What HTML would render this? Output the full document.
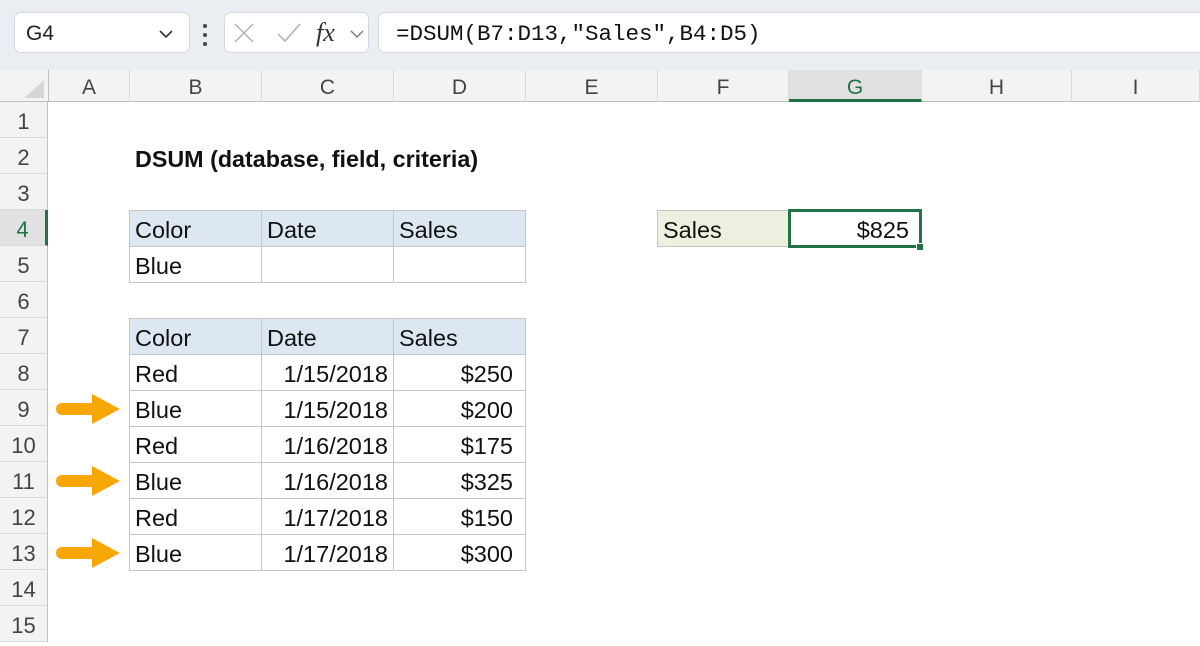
<!DOCTYPE html>
<html><head><style>
*{margin:0;padding:0;box-sizing:border-box}
body{width:1200px;height:630px;overflow:hidden;background:#fff;font-family:"Liberation Sans",sans-serif;position:relative}
.a{position:absolute}
.top{left:0;top:0;width:1200px;height:70px;background:#eaeef3}
.box{background:#fff;border:1px solid #d4d8de;border-radius:7px}
.ch{position:absolute;top:70px;height:32px;background:#f3f3f3;border-right:1px solid #d9d9d9;border-bottom:1px solid #bfbfbf;text-align:center;line-height:35px;font-size:21px;color:#444}
.rh{position:absolute;left:0;width:48px;height:36px;background:#f3f3f3;border-bottom:1px solid #d9d9d9;border-right:1px solid #bfbfbf;text-align:center;line-height:40px;font-size:22px;color:#444}
.c{position:absolute;height:37px;border:1px solid #c6c6c6;font-size:23.5px;line-height:39px;padding:0 5px;color:#111;white-space:nowrap}
.h{background:#dde7f1}
.r{text-align:right}
</style></head><body>
<div class="a top"></div>
<div class="a box" style="left:14px;top:12px;width:176px;height:41px"></div>
<div class="a" style="left:26px;top:22px;font-size:21px;color:#222">G4</div>
<svg class="a" style="left:158px;top:29px" width="16" height="10"><path d="M2 2 L8 8 L14 2" fill="none" stroke="#333" stroke-width="1.6"/></svg>
<div class="a" style="left:203px;top:24px;width:4px;height:4px;background:#444;border-radius:2px"></div>
<div class="a" style="left:203px;top:33px;width:4px;height:4px;background:#444;border-radius:2px"></div>
<div class="a" style="left:203px;top:42px;width:4px;height:4px;background:#444;border-radius:2px"></div>
<div class="a box" style="left:224px;top:12px;width:145px;height:41px"></div>
<svg class="a" style="left:230px;top:20px" width="140" height="28"><path d="M5 4 L23 22 M23 4 L5 22" stroke="#b0b0b0" stroke-width="1.5"/><path d="M48 14 L55 21 L70 4" fill="none" stroke="#b0b0b0" stroke-width="1.5"/><path d="M121 11 L127 17 L133 11" fill="none" stroke="#777" stroke-width="1.4"/></svg>
<div class="a" style="left:316px;top:18px;font-family:'Liberation Serif',serif;font-style:italic;font-size:26px;color:#333">fx</div>
<div class="a box" style="left:378px;top:12px;width:830px;height:41px"></div>
<div class="a" style="left:396px;top:21px;font-family:'Liberation Mono',monospace;font-size:22.5px;color:#111">=DSUM(B7:D13,"Sales",B4:D5)</div>

<div class="ch" style="left:0;width:49px;border-right:1px solid #bfbfbf"></div>
<svg class="a" style="left:22px;top:78px" width="24" height="22"><path d="M22 2 L22 20 L2 20 Z" fill="#d6d6d6"/></svg>
<div class="ch" style="left:49px;width:81px">A</div>
<div class="ch" style="left:130px;width:132px">B</div>
<div class="ch" style="left:262px;width:132px">C</div>
<div class="ch" style="left:394px;width:132px">D</div>
<div class="ch" style="left:526px;width:132px">E</div>
<div class="ch" style="left:658px;width:131px">F</div>
<div class="ch" style="left:789px;width:133px;background:#e1e1e1;color:#217346;border-bottom:3px solid #217346">G</div>
<div class="ch" style="left:922px;width:150px">H</div>
<div class="ch" style="left:1072px;width:128px">I</div>

<div class="rh" style="top:102px">1</div>
<div class="rh" style="top:138px">2</div>
<div class="rh" style="top:174px">3</div>
<div class="rh" style="top:210px;background:#e1e1e1;color:#217346;border-right:3px solid #217346">4</div>
<div class="rh" style="top:246px">5</div>
<div class="rh" style="top:282px">6</div>
<div class="rh" style="top:318px">7</div>
<div class="rh" style="top:354px">8</div>
<div class="rh" style="top:390px">9</div>
<div class="rh" style="top:426px">10</div>
<div class="rh" style="top:462px">11</div>
<div class="rh" style="top:498px">12</div>
<div class="rh" style="top:534px">13</div>
<div class="rh" style="top:570px">14</div>
<div class="rh" style="top:606px">15</div>

<div class="a" style="left:135px;top:146px;font-size:23.3px;font-weight:bold;color:#111;white-space:nowrap">DSUM (database, field, criteria)</div>

<div class="c h" style="left:129px;top:210px;width:133px">Color</div>
<div class="c h" style="left:261px;top:210px;width:133px">Date</div>
<div class="c h" style="left:393px;top:210px;width:133px">Sales</div>
<div class="c" style="left:129px;top:246px;width:133px">Blue</div>
<div class="c" style="left:261px;top:246px;width:133px"></div>
<div class="c" style="left:393px;top:246px;width:133px"></div>

<div class="c h" style="left:129px;top:318px;width:133px">Color</div>
<div class="c h" style="left:261px;top:318px;width:133px">Date</div>
<div class="c h" style="left:393px;top:318px;width:133px">Sales</div>

<div class="c" style="left:129px;top:354px;width:133px">Red</div><div class="c r" style="left:261px;top:354px;width:133px">1/15/2018</div><div class="c r" style="left:393px;top:354px;width:133px;padding-right:12px">$250</div>
<div class="c" style="left:129px;top:390px;width:133px">Blue</div><div class="c r" style="left:261px;top:390px;width:133px">1/15/2018</div><div class="c r" style="left:393px;top:390px;width:133px;padding-right:12px">$200</div>
<div class="c" style="left:129px;top:426px;width:133px">Red</div><div class="c r" style="left:261px;top:426px;width:133px">1/16/2018</div><div class="c r" style="left:393px;top:426px;width:133px;padding-right:12px">$175</div>
<div class="c" style="left:129px;top:462px;width:133px">Blue</div><div class="c r" style="left:261px;top:462px;width:133px">1/16/2018</div><div class="c r" style="left:393px;top:462px;width:133px;padding-right:12px">$325</div>
<div class="c" style="left:129px;top:498px;width:133px">Red</div><div class="c r" style="left:261px;top:498px;width:133px">1/17/2018</div><div class="c r" style="left:393px;top:498px;width:133px;padding-right:12px">$150</div>
<div class="c" style="left:129px;top:534px;width:133px">Blue</div><div class="c r" style="left:261px;top:534px;width:133px">1/17/2018</div><div class="c r" style="left:393px;top:534px;width:133px;padding-right:12px">$300</div>

<div class="c" style="left:657px;top:210px;width:133px;background:#ebf1de">Sales</div>
<div class="a" style="left:788px;top:209px;width:134px;height:39px;border:3px solid #217346;font-size:23.5px;line-height:37px;text-align:right;padding-right:10px;color:#111">$825</div>
<div class="a" style="left:916px;top:243px;width:8px;height:8px;background:#217346;border:1px solid #fff"></div>

<svg class="a" style="left:0;top:0" width="130" height="630">
<g fill="#f6a800">
<path d="M62 403 H92 V394 L120 409 L92 424 V415 H62 A6 6 0 0 1 62 403 Z"/>
<path d="M62 475 H92 V466 L120 481 L92 496 V487 H62 A6 6 0 0 1 62 475 Z"/>
<path d="M62 547 H92 V538 L120 553 L92 568 V559 H62 A6 6 0 0 1 62 547 Z"/>
</g></svg>
</body></html>
